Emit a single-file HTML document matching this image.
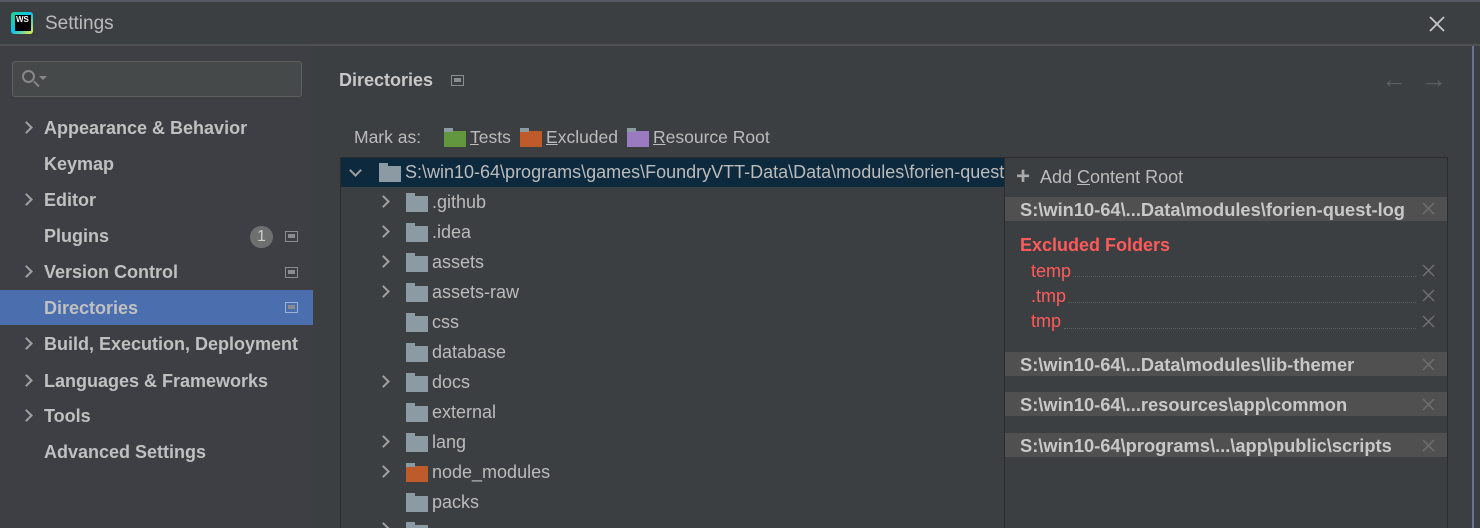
<!DOCTYPE html>
<html style="overflow:hidden;width:1480px;height:528px"><head><style>
*{margin:0;padding:0;box-sizing:border-box}
body{width:1480px;height:528px;background:#3c3f41;font-family:"Liberation Sans",sans-serif;color:#bbbbbb;position:relative;overflow:hidden}
.a{position:absolute;white-space:nowrap}
.side{left:0;top:46px;width:313px;height:482px;background:#3d3f45}
.si{position:absolute;left:44px;font-size:18px;font-weight:bold;color:#c0c0c0;white-space:nowrap}
.chev{position:absolute;left:22px;width:9px;height:9px;border-right:2px solid #a0a0a0;border-bottom:2px solid #a0a0a0;transform:rotate(-45deg)}
.ic{position:absolute;width:13px;height:11px;border:1.5px solid #8a8d90}
.ic:after{content:"";position:absolute;left:2px;top:2px;right:2px;bottom:3px;background:#8a8d90}
.fold{position:absolute;width:22px;height:16px;background:#8c9aa3}
.fold:before{content:"";position:absolute;left:0;top:-3px;width:9px;height:4px;background:#8c9aa3}
.tr{position:absolute;font-size:18px;color:#bbbbbb;white-space:nowrap}
.x{position:absolute;left:1422px;width:13px;height:13px}
.hd{position:absolute;left:1005px;width:442px;height:24px;background:#505050;font-size:18.3px;font-weight:bold;color:#c8c8c8;padding-left:15px;line-height:26px;white-space:nowrap}
.ex{position:absolute;left:1031px;font-size:18px;color:#ff5a5a}
.dot{position:absolute;border-bottom:1px dotted #606060}
</style></head><body>
<svg width="0" height="0" style="position:absolute"><symbol id="x" viewBox="0 0 13 13"><path d="M1 1L12 12M12 1L1 12" stroke="#6e6e6e" stroke-width="1.5"/></symbol></svg>
<div class="a" style="left:0;top:0;width:1480px;height:2px;background:#555a66"></div>
<div class="a" style="left:11px;top:12px;width:22px;height:22px;background:linear-gradient(135deg,#21d789,#07c3f2 50%,#f8ee33);border-radius:3px"></div>
<div class="a" style="left:15px;top:15px;width:16px;height:16px;background:#000;color:#fff;font-size:8px;font-weight:bold;line-height:9px;padding-left:1px">WS</div>
<div class="a" style="left:45px;top:13px;font-size:19px;color:#bbbbbb">Settings</div>
<svg class="a" style="left:1429px;top:16px" width="16" height="16"><path d="M1 1L15 15M15 1L1 15" stroke="#c8c8c8" stroke-width="1.8"/></svg>
<div class="a" style="left:0;top:44px;width:1480px;height:2px;background:#4f5052"></div>
<div class="a side"></div>
<div class="a" style="left:12px;top:61px;width:290px;height:36px;border:1px solid #5e6060;background:#45494a;border-radius:3px"></div>
<div class="a" style="left:22px;top:70px;width:13px;height:13px;border:2px solid #888;border-radius:50%"></div>
<div class="a" style="left:33px;top:83px;width:7px;height:2px;background:#888;transform:rotate(45deg)"></div>
<div class="a" style="left:39px;top:76px;border:4px solid transparent;border-top:4px solid #888"></div>
<div class="a" style="left:0;top:290px;width:313px;height:35px;background:#4b6eaf"></div>
<div class="chev" style="top:123px"></div><div class="si" style="top:118px">Appearance &amp; Behavior</div>
<div class="si" style="top:154px">Keymap</div>
<div class="chev" style="top:195px"></div><div class="si" style="top:190px">Editor</div>
<div class="si" style="top:226px">Plugins</div>
<div class="a" style="left:250px;top:226px;width:23px;height:22px;border-radius:11px;background:#6e7070;color:#ccc;font-size:16px;text-align:center;line-height:22px">1</div>
<div class="ic" style="left:285px;top:231px"></div>
<div class="chev" style="top:267px"></div><div class="si" style="top:262px">Version Control</div>
<div class="ic" style="left:285px;top:267px"></div>
<div class="si" style="top:298px">Directories</div>
<div class="ic" style="left:285px;top:302px;border-color:#9ab0d6"></div>
<div class="chev" style="top:339px"></div><div class="si" style="top:334px">Build, Execution, Deployment</div>
<div class="chev" style="top:376px"></div><div class="si" style="top:371px">Languages &amp; Frameworks</div>
<div class="chev" style="top:411px"></div><div class="si" style="top:406px">Tools</div>
<div class="si" style="top:442px">Advanced Settings</div>

<div class="a" style="left:339px;top:70px;font-size:18px;font-weight:bold;color:#c8c8c8">Directories</div>
<div class="ic" style="left:451px;top:75px"></div>
<div class="a" style="left:1381px;top:64px;font-size:26px;font-weight:bold;color:#5d6062">←</div>
<div class="a" style="left:1421px;top:64px;font-size:26px;font-weight:bold;color:#5d6062">→</div>
<div class="a" style="left:354px;top:127px;font-size:17.5px">Mark as:</div>
<div class="fold" style="left:444px;top:131px;background:#62973f"></div>
<div class="a" style="left:470px;top:127px;font-size:17.5px"><u>T</u>ests</div>
<div class="fold" style="left:520px;top:131px;background:#bf5b2a"></div>
<div class="a" style="left:546px;top:127px;font-size:17.5px"><u>E</u>xcluded</div>
<div class="fold" style="left:627px;top:131px;background:#9a7bc2"></div>
<div class="a" style="left:653px;top:127px;font-size:17.5px"><u>R</u>esource Root</div>

<div class="a" style="left:340px;top:157px;width:1108px;height:371px;border:1px solid #2b2b2b;border-bottom:none;background:#3c3f41"></div>
<div class="a" style="left:341px;top:158px;width:663px;height:29px;background:#0d293e"></div>
<div class="a" style="left:1004px;top:157px;width:1px;height:371px;background:#2b2b2b"></div>
<div class="a" style="left:1472px;top:46px;width:2px;height:482px;background:#6a7590"></div>
<div class="a" style="left:351px;top:166px;width:9px;height:9px;border-right:2px solid #a0a0a0;border-bottom:2px solid #a0a0a0;transform:rotate(45deg)"></div>
<div class="fold" style="left:379px;top:166px"></div>
<div class="a" style="left:341px;top:158px;width:663px;height:29px;overflow:hidden"><span class="tr" style="left:64px;top:4px">S:\win10-64\programs\games\FoundryVTT-Data\Data\modules\forien-quest-log</span></div>

<div class="a" style="left:0;top:0;width:1480px;height:528px;overflow:hidden">
<div class="chev" style="left:379px;top:197px"></div><div class="fold" style="left:406px;top:196px"></div><div class="tr" style="left:432px;top:192px">.github</div>
<div class="chev" style="left:379px;top:227px"></div><div class="fold" style="left:406px;top:226px"></div><div class="tr" style="left:432px;top:222px">.idea</div>
<div class="chev" style="left:379px;top:257px"></div><div class="fold" style="left:406px;top:256px"></div><div class="tr" style="left:432px;top:252px">assets</div>
<div class="chev" style="left:379px;top:287px"></div><div class="fold" style="left:406px;top:286px"></div><div class="tr" style="left:432px;top:282px">assets-raw</div>
<div class="fold" style="left:406px;top:316px"></div><div class="tr" style="left:432px;top:312px">css</div>
<div class="fold" style="left:406px;top:346px"></div><div class="tr" style="left:432px;top:342px">database</div>
<div class="chev" style="left:379px;top:377px"></div><div class="fold" style="left:406px;top:376px"></div><div class="tr" style="left:432px;top:372px">docs</div>
<div class="fold" style="left:406px;top:406px"></div><div class="tr" style="left:432px;top:402px">external</div>
<div class="chev" style="left:379px;top:437px"></div><div class="fold" style="left:406px;top:436px"></div><div class="tr" style="left:432px;top:432px">lang</div>
<div class="chev" style="left:379px;top:467px"></div><div class="fold" style="left:406px;top:466px;background:#bf5b2a"></div><div class="tr" style="left:432px;top:462px">node_modules</div>
<div class="fold" style="left:406px;top:496px"></div><div class="tr" style="left:432px;top:492px">packs</div>
<div class="chev" style="left:379px;top:524px"></div><div class="fold" style="left:406px;top:525px"></div>
</div>

<div class="a" style="left:1016px;top:163px;font-size:24px;color:#aaa;font-weight:bold">+</div>
<div class="a" style="left:1040px;top:167px;font-size:18px">Add <u>C</u>ontent Root</div>
<div class="hd" style="top:197px">S:\win10-64\...Data\modules\forien-quest-log</div>
<svg class="x" style="top:202px"><use href="#x"/></svg>
<div class="a" style="left:1020px;top:235px;font-size:18px;font-weight:bold;color:#ff5a5a">Excluded Folders</div>
<div class="ex" style="top:261px">temp</div><div class="dot" style="left:1073px;width:343px;top:276px"></div><svg class="x" style="top:264px"><use href="#x"/></svg>
<div class="ex" style="top:286px">.tmp</div><div class="dot" style="left:1068px;width:348px;top:302px"></div><svg class="x" style="top:289px"><use href="#x"/></svg>
<div class="ex" style="top:311px">tmp</div><div class="dot" style="left:1064px;width:352px;top:328px"></div><svg class="x" style="top:315px"><use href="#x"/></svg>
<div class="hd" style="top:352px">S:\win10-64\...Data\modules\lib-themer</div><svg class="x" style="top:358px"><use href="#x"/></svg>
<div class="hd" style="top:392px">S:\win10-64\...resources\app\common</div><svg class="x" style="top:398px"><use href="#x"/></svg>
<div class="hd" style="top:433px">S:\win10-64\programs\...\app\public\scripts</div><svg class="x" style="top:439px"><use href="#x"/></svg>
</body></html>
